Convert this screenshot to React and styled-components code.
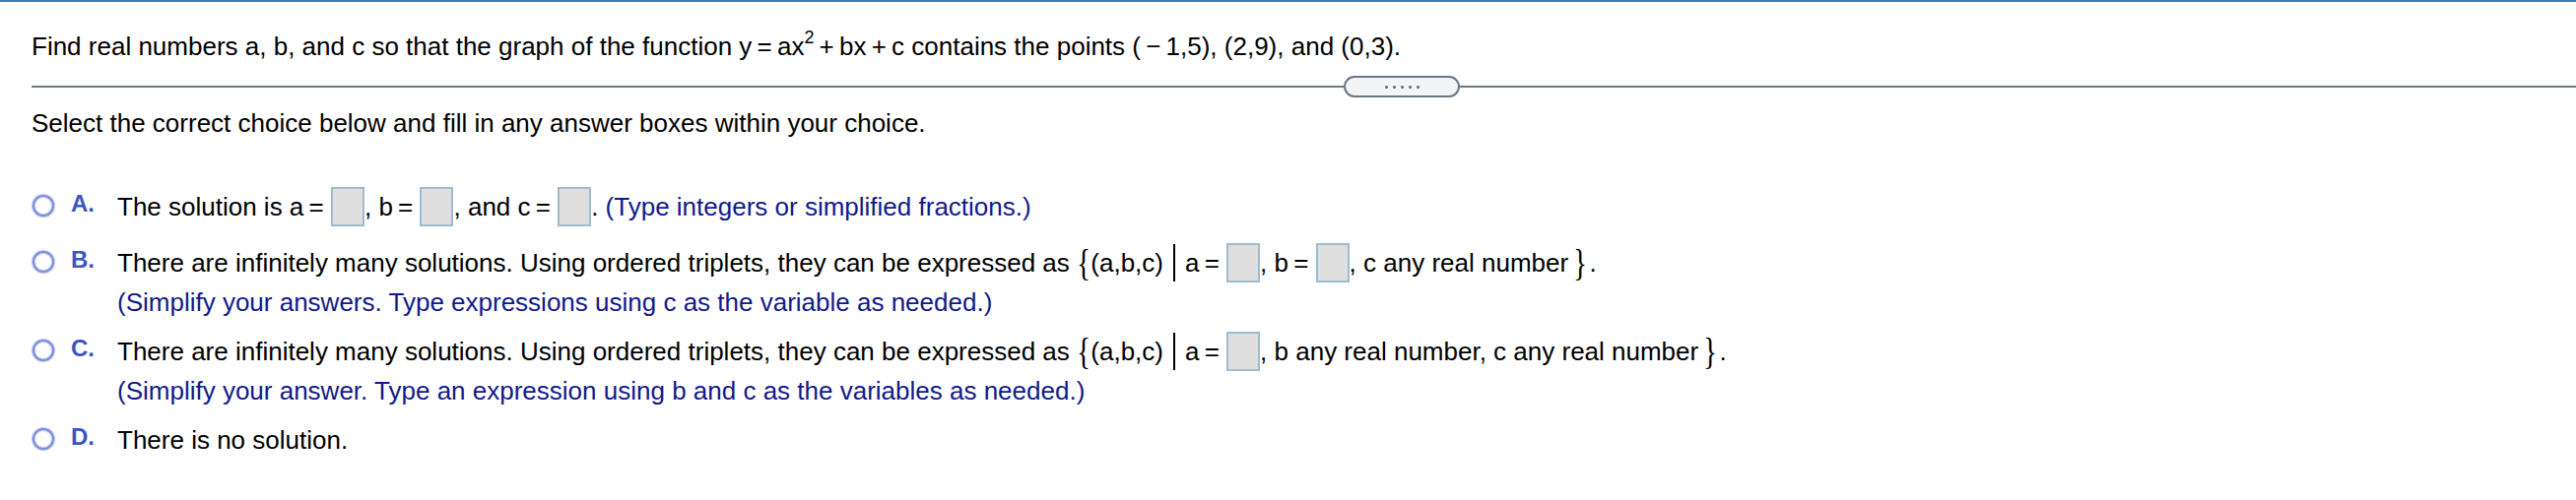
import styled, { createGlobalStyle } from "styled-components";

const Global = createGlobalStyle`
  html, body {
    margin: 0;
    padding: 0;
    background: #fff;
  }
  body {
    font-family: "Liberation Sans", Arial, sans-serif;
    color: #000;
  }
`;

const Page = styled.div`
  border-top: 2px solid #3f7fb5;
  padding: 31px 0 0 32px;
  font-size: 26px;
  line-height: 28px;
`;

const Question = styled.div`
  white-space: pre;
`;

const Sup = styled.sup`
  font-size: 18px;
  line-height: 0;
  vertical-align: 12px;
`;

const Divider = styled.div`
  display: flex;
  align-items: center;
  height: 22px;
  margin-top: 16px;
`;

const Rule = styled.div`
  height: 2px;
  background: #6b7987;
  width: ${(p) => (p.$grow ? "auto" : `${p.$w}px`)};
  flex: ${(p) => (p.$grow ? 1 : "none")};
`;

const Pill = styled.div`
  width: 114px;
  height: 18px;
  border: 2px solid #6b7785;
  border-radius: 11px;
  background: #f3f4f6;
  display: flex;
  align-items: center;
  justify-content: center;
  gap: 5px;
`;

const Dot = styled.span`
  width: 3px;
  height: 3px;
  border-radius: 50%;
  background: #59636e;
`;

const Prompt = styled.div`
  margin-top: 12px;
`;

const Options = styled.div`
  margin-top: 50px;
  display: flex;
  flex-direction: column;
  gap: 15px;
`;

const Option = styled.div`
  display: flex;
  align-items: flex-start;
  padding-left: 1px;
`;

const Radio = styled.span`
  flex: none;
  width: 18px;
  height: 18px;
  margin-top: 9px;
  border: 2px solid #7b8fdc;
  border-radius: 50%;
  box-shadow: 0 0 1px 1px rgba(123, 143, 220, 0.5), inset 0 0 1px 1px rgba(123, 143, 220, 0.45);
  background: #fff;
`;

const Letter = styled.span`
  flex: none;
  width: 47px;
  margin-left: 17px;
  margin-top: 4px;
  font-size: 24px;
  font-weight: bold;
  color: #3a55c4;
  line-height: 28px;
`;

const Body = styled.div`
  display: flex;
  flex-direction: column;
`;

const Line = styled.div`
  display: flex;
  align-items: center;
  min-height: 42px;
  white-space: pre;
`;

const Hint = styled.span`
  color: #101a8c;
`;

const HintLine = styled.div`
  color: #101a8c;
  margin-top: 5px;
  white-space: pre;
`;

const AnswerBox = styled.span`
  display: inline-block;
  width: 30px;
  height: 36px;
  border: 2px solid #9dbccf;
  background: #dfdfdf;
`;

const Brace = styled.span`
  font-family: "Liberation Serif", "Times New Roman", serif;
  font-size: 38px;
  line-height: 40px;
  transform: scaleX(0.75);
  display: inline-block;
  margin: ${(p) => (p.$close ? "0 0 0 3px" : "0 -2px")};
`;

const Bar = styled.span`
  display: inline-block;
  width: 2px;
  height: 38px;
  background: #000;
  margin: 0 10px 0 10px;
`;

// thin space used around math operators
const t = "\u2009";

function SetHead() {
  return (
    <>
      <Brace>{"{"}</Brace>
      <span>(a,b,c)</span>
      <Bar />
    </>
  );
}

export default function App() {
  return (
    <>
      <Global />
      <Page>
        <Question>
          {`Find real numbers a, b, and c so that the graph of the function y${t}=${t}ax`}
          <Sup>2</Sup>
          {`${t}+${t}bx${t}+${t}c contains the points (${t}−${t}1,5), (2,9), and (0,3).`}
        </Question>
        <Divider>
          <Rule $w={1332} />
          <Pill>
            <Dot />
            <Dot />
            <Dot />
            <Dot />
            <Dot />
          </Pill>
          <Rule $grow />
        </Divider>
        <Prompt>Select the correct choice below and fill in any answer boxes within your choice.</Prompt>

        <Options>
          <Option>
            <Radio />
            <Letter>A.</Letter>
            <Body>
              <Line>
                <span>{`The solution is a${t}= `}</span>
                <AnswerBox />
                <span>{`, b${t}= `}</span>
                <AnswerBox />
                <span>{`, and c${t}= `}</span>
                <AnswerBox />
                <span>. </span>
                <Hint>(Type integers or simplified fractions.)</Hint>
              </Line>
            </Body>
          </Option>

          <Option>
            <Radio />
            <Letter>B.</Letter>
            <Body>
              <Line>
                <span>There are infinitely many solutions. Using ordered triplets, they can be expressed as </span>
                <SetHead />
                <span>{`a${t}= `}</span>
                <AnswerBox />
                <span>{`, b${t}= `}</span>
                <AnswerBox />
                <span>, c any real number</span>
                <Brace $close>{"}"}</Brace>
                <span>.</span>
              </Line>
              <HintLine>(Simplify your answers. Type expressions using c as the variable as needed.)</HintLine>
            </Body>
          </Option>

          <Option>
            <Radio />
            <Letter>C.</Letter>
            <Body>
              <Line>
                <span>There are infinitely many solutions. Using ordered triplets, they can be expressed as </span>
                <SetHead />
                <span>{`a${t}= `}</span>
                <AnswerBox />
                <span>, b any real number, c any real number</span>
                <Brace $close>{"}"}</Brace>
                <span>.</span>
              </Line>
              <HintLine>(Simplify your answer. Type an expression using b and c as the variables as needed.)</HintLine>
            </Body>
          </Option>

          <Option>
            <Radio />
            <Letter>D.</Letter>
            <Body>
              <Line>
                <span>There is no solution.</span>
              </Line>
            </Body>
          </Option>
        </Options>
      </Page>
    </>
  );
}
